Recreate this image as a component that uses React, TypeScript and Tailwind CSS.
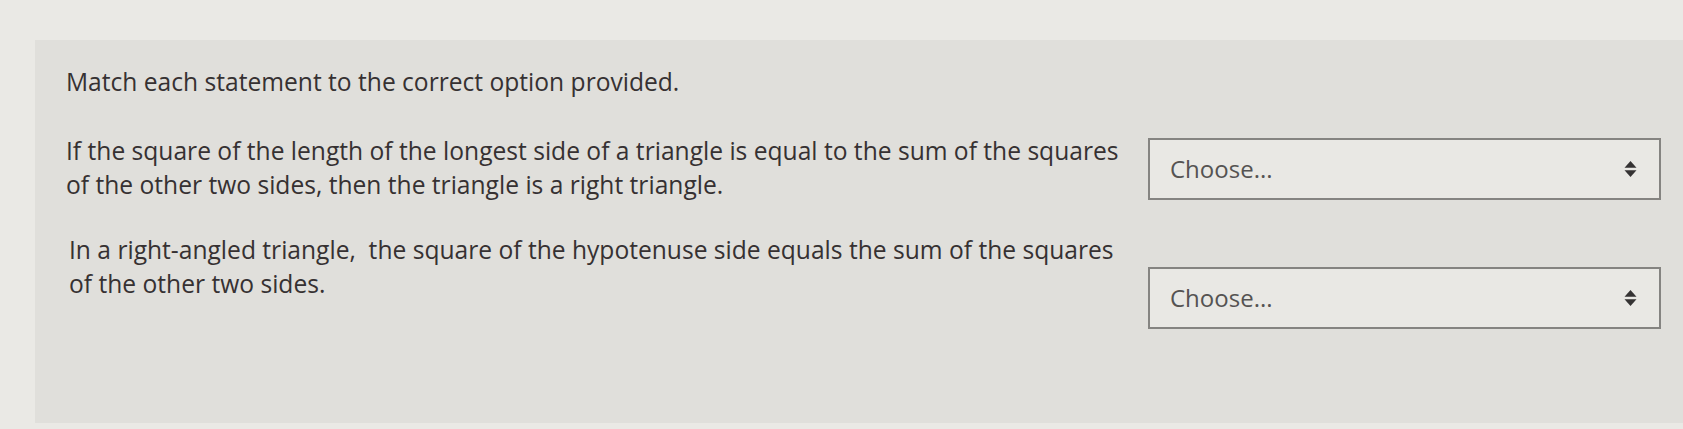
import React from "react";

function UpDown() {
  return (
    <svg width="13" height="18" viewBox="0 0 13 18" aria-hidden="true">
      <path d="M6.5 1 L12.5 7.8 L0.5 7.8 Z" fill="#353333" />
      <path d="M6.5 17 L12.5 10.2 L0.5 10.2 Z" fill="#353333" />
    </svg>
  );
}

function Choose({ className }: { className?: string }) {
  return (
    <div
      className={
        "flex h-[62px] w-[513px] items-center justify-between border-2 border-[#858481] bg-[#e9e8e4] pl-[20px] pr-[22px] " +
        (className ?? "")
      }
    >
      <span className="text-[24px] text-[#555352]">Choose...</span>
      <UpDown />
    </div>
  );
}

export default function App() {
  return (
    <div
      className="h-[429px] w-[1683px] overflow-hidden bg-[#eae9e5] pt-[40px] pl-[35px]"
      style={{ fontFamily: '"Open Sans", "Noto Sans", sans-serif' }}
    >
      <div className="h-[383px] w-full bg-[#e0dfdb] pl-[31px] pt-[25px] text-[24.6px] leading-[34px] text-[#363132]">
        <p>Match each statement to the correct option provided.</p>
        <div className="mt-[35px] flex">
          <p className="w-[1082px] whitespace-nowrap">
            If the square of the length of the longest side of a triangle is equal to the sum of the squares
            <br />
            of the other two sides, then the triangle is a right triangle.
          </p>
          <Choose className="mt-[4px]" />
        </div>
        <div className="mt-[31px] flex">
          <p className="w-[1082px] whitespace-pre pl-[3px]">
            {"In a right-angled triangle,  the square of the hypotenuse side equals the sum of the squares"}
            <br />
            {"of the other two sides."}
          </p>
          <Choose className="mt-[34px]" />
        </div>
      </div>
    </div>
  );
}
